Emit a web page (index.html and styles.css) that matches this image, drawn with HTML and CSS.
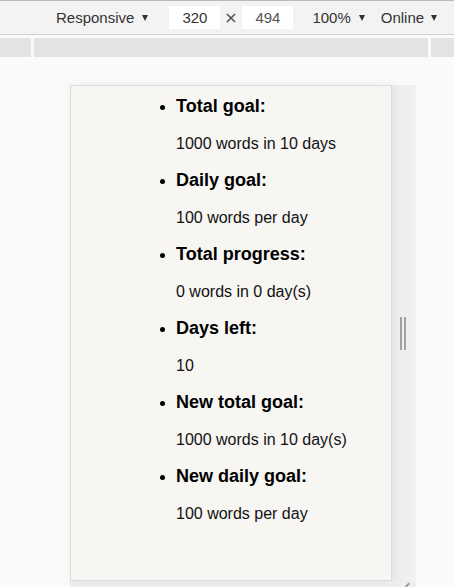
FILE: index.html
```html
<!DOCTYPE html>
<html>
<head>
<meta charset="utf-8">
<link rel="stylesheet" href="styles.css">
</head>
<body>
<div class="toolbar">
  <div class="tb-item">Responsive<span class="tri"></span></div>
  <div class="dims">
    <span class="dim-box">320</span>
    <svg class="times" width="10" height="10" viewBox="0 0 10 10"><path d="M1 1 L9 9 M9 1 L1 9" stroke="#555" stroke-width="1.6"/></svg>
    <span class="dim-box muted">494</span>
  </div>
  <div class="tb-item zoom">100%<span class="tri"></span></div>
  <div class="tb-item online">Online<span class="tri"></span></div>
</div>
<div class="ruler">
  <div class="seg seg-a"></div>
  <div class="seg seg-b"></div>
  <div class="seg seg-c"></div>
</div>
<div class="canvas">
  <div class="device">
    <div class="frame">
      <ul class="stats">
        <li><div class="label">Total goal:</div><div class="value">1000 words in 10 days</div></li>
        <li><div class="label">Daily goal:</div><div class="value">100 words per day</div></li>
        <li><div class="label">Total progress:</div><div class="value">0 words in 0 day(s)</div></li>
        <li><div class="label">Days left:</div><div class="value">10</div></li>
        <li><div class="label">New total goal:</div><div class="value">1000 words in 10 day(s)</div></li>
        <li><div class="label">New daily goal:</div><div class="value">100 words per day</div></li>
      </ul>
    </div>
    <div class="side-handle"><span class="grip"></span><span class="grip"></span></div>
    <div class="bottom-handle"><span class="corner"></span></div>
  </div>
</div>
</body>
</html>
```
FILE: styles.css
```css
html, body {
  margin: 0;
  padding: 0;
}
body {
  width: 454px;
  height: 587px;
  overflow: hidden;
  background: #fafafa;
  font-family: "Liberation Sans", Arial, sans-serif;
}
.toolbar {
  height: 33px;
  border-top: 1px solid #b9b9b9;
  border-bottom: 1px solid #cfcfcf;
  background: #f3f3f3;
  display: flex;
  align-items: center;
  font-size: 15px;
  color: #333;
  box-sizing: content-box;
}
.tb-item {
  display: flex;
  align-items: center;
  white-space: nowrap;
}
.tb-item:first-child {
  margin-left: 56px;
}
.tri {
  display: inline-block;
  width: 0;
  height: 0;
  border-left: 3.5px solid transparent;
  border-right: 3.5px solid transparent;
  border-top: 6.5px solid #333;
  margin-left: 8px;
}
.dims {
  display: flex;
  align-items: center;
  margin-left: 21px;
}
.dim-box {
  display: block;
  width: 51px;
  height: 23px;
  line-height: 23px;
  background: #fff;
  text-align: center;
  color: #333;
}
.dim-box.muted {
  color: #555;
}
.times {
  margin: 0 6px 0 6px;
}
.zoom {
  margin-left: 19px;
}
.online {
  margin-left: 16px;
}
.online .tri {
  margin-left: 7px;
}
.ruler {
  margin-top: 3px;
  height: 19px;
  display: flex;
  gap: 3px;
}
.seg {
  background: #e3e3e3;
  height: 100%;
}
.seg-a { width: 31px; }
.seg-b { width: 394px; }
.seg-c { flex: 1; }
.canvas {
  padding: 28px 0 0 70px;
}
.device {
  display: grid;
  grid-template-columns: 322px 24px;
  grid-template-rows: 496px 20px;
  width: 346px;
}
.frame {
  grid-column: 1;
  grid-row: 1;
  box-sizing: border-box;
  border: 1px solid #dcdcdc;
  background: #f7f6f3;
  box-shadow: 0 0 10px rgba(0,0,0,0.05);
  position: relative;
  z-index: 1;
}
.side-handle {
  grid-column: 2;
  grid-row: 1;
  background: linear-gradient(to right, #ebebeb, #f2f2f2);
  display: flex;
  justify-content: center;
  align-items: flex-start;
  gap: 2px;
  padding-top: 232px;
  padding-right: 2px;
}
.grip {
  display: block;
  width: 2px;
  height: 33px;
  background: #a2a2a2;
}
.bottom-handle {
  grid-column: 1 / 3;
  grid-row: 2;
  background: linear-gradient(to bottom, #eeeeee, #f3f3f3);
  position: relative;
}
.corner {
  position: absolute;
  left: 335px;
  top: 3px;
  width: 5px;
  height: 2px;
  background: #9a9a9a;
  transform: rotate(-45deg);
}
.stats {
  margin: 0;
  padding: 2px 0 0 105px;
  color: #000;
  font-size: 16px;
}
.stats li {
  list-style: disc;
}
.label {
  font-weight: bold;
  font-size: 18px;
  line-height: 37px;
}
.value {
  font-size: 16px;
  line-height: 37px;
  color: #111;
}
```
